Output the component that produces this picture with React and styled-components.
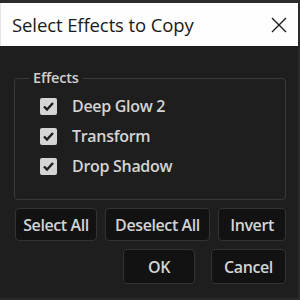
import React from "react";
import styled, { createGlobalStyle } from "styled-components";

const Global = createGlobalStyle`
  html, body {
    margin: 0;
    padding: 0;
    background: #1e1e1e;
  }
`;

const effects = ["Deep Glow 2", "Transform", "Drop Shadow"];

const App = () => {
  return (
    <Window>
      <Global />
      <TitleBar>
        <Title>Select Effects to Copy</Title>
        <CloseButton aria-label="Close">
          <svg width="16" height="16" viewBox="0 0 16 16">
            <path d="M1 1 L15 15 M15 1 L1 15" stroke="#1f1f1f" strokeWidth="1.4" fill="none" />
          </svg>
        </CloseButton>
      </TitleBar>
      <Body>
        <Group>
          <Legend>Effects</Legend>
          <List>
            {effects.map((name) => (
              <Row key={name}>
                <Check>
                  <svg width="13" height="11" viewBox="0 0 13 11">
                    <path d="M2 5.5 L5 8.5 L11 2" stroke="#1e1e1e" strokeWidth="2.4" fill="none" />
                  </svg>
                </Check>
                <Label>{name}</Label>
              </Row>
            ))}
          </List>
        </Group>
        <ButtonRow>
          <Button w={82}>Select All</Button>
          <Button w={105}>Deselect All</Button>
          <Button w={68}>Invert</Button>
        </ButtonRow>
        <ButtonRow end gap={16}>
          <Button w={72} h={35}>OK</Button>
          <Button w={75} h={35}>Cancel</Button>
        </ButtonRow>
      </Body>
    </Window>
  );
};

const Window = styled.div`
  width: 300px;
  height: 300px;
  box-sizing: border-box;
  border-top: 3px solid #2c2c2c;
  border-right: 2px solid #2a2a2a;
  border-bottom: 2px solid #2a2a2a;
  background: #1e1e1e;
  display: flex;
  flex-direction: column;
  overflow: hidden;
`;

const TitleBar = styled.div`
  height: 43px;
  background: #fefefe;
  display: flex;
  align-items: center;
  justify-content: space-between;
  padding: 0 12px 0 11px;
  border-left: 1px solid #e6e6e6;
`;

const Title = styled.div`
  font-family: "Open Sans", "Noto Sans", sans-serif;
  font-size: 18.5px;
  color: #1a1a1a;
  letter-spacing: -0.1px;
  margin-top: -1px;
`;

const CloseButton = styled.div`
  width: 16px;
  height: 16px;
  display: flex;
  margin-right: -1px;
`;

const Body = styled.div`
  flex: 1;
  display: flex;
  flex-direction: column;
  padding: 22px 12px 0 14px;
  font-family: "Open Sans", "Noto Sans", sans-serif;
  color: #d4d4d4;
`;

const Group = styled.fieldset`
  margin: 0;
  padding: 0;
  border: 1px solid #393939;
  border-radius: 4px;
  min-width: 0;
`;

const Legend = styled.legend`
  margin-left: 14px;
  padding: 0 4px;
  font-size: 14.5px;
  font-weight: 600;
  line-height: 20px;
  color: #cfcfcf;
  letter-spacing: -0.2px;
`;

const List = styled.div`
  display: flex;
  flex-direction: column;
  padding: 3px 0 18px 25px;
`;

const Row = styled.div`
  height: 30px;
  display: flex;
  align-items: center;
  gap: 15px;
`;

const Check = styled.div`
  width: 17px;
  height: 17px;
  border-radius: 2px;
  background: #d5d5d5;
  display: flex;
  align-items: center;
  justify-content: center;
`;

const Label = styled.span`
  font-size: 16px;
  font-weight: 600;
  color: #d4d4d4;
  letter-spacing: -0.3px;
`;

const ButtonRow = styled.div`
  display: flex;
  justify-content: ${(p) => (p.end ? "flex-end" : "flex-start")};
  gap: ${(p) => p.gap || 8}px;
  margin-top: 8px;
  padding-left: 1px;
`;

const Button = styled.div`
  width: ${(p) => p.w}px;
  height: ${(p) => p.h || 33}px;
  box-sizing: border-box;
  border: 1px solid #333333;
  border-radius: 4px;
  background: #121212;
  display: flex;
  align-items: center;
  justify-content: center;
  font-size: 16px;
  font-weight: 600;
  color: #d4d4d4;
  letter-spacing: -0.4px;
`;

export default App;
